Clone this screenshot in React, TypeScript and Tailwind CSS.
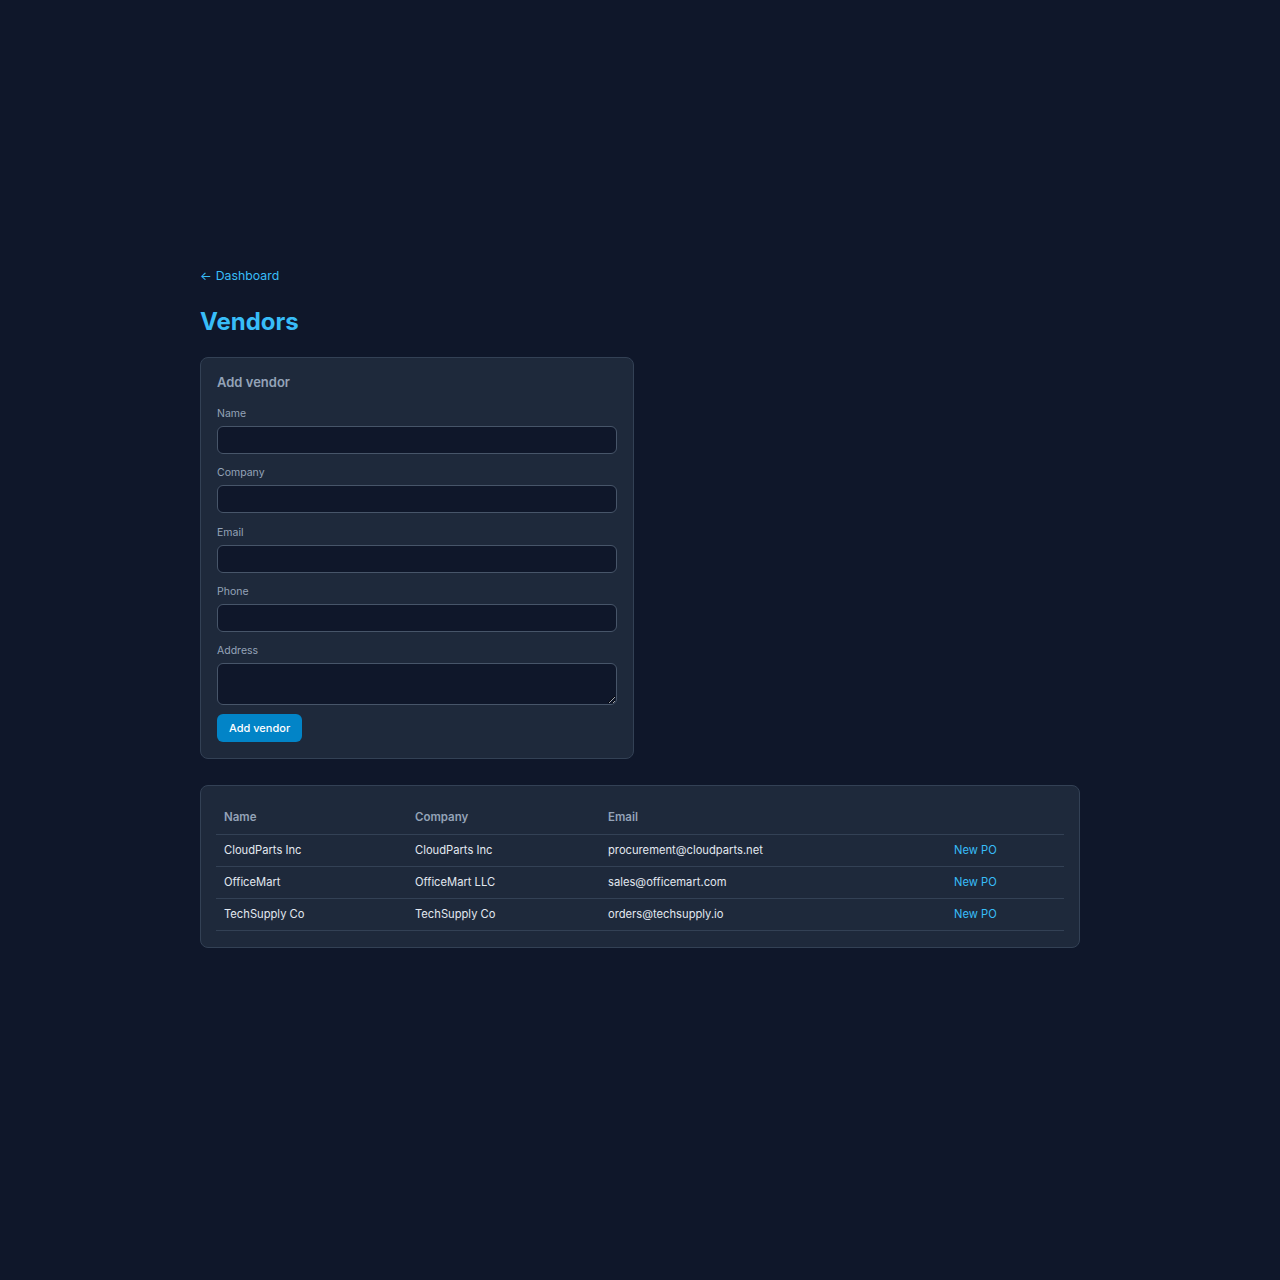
import React from "react";

const fields = ["Name", "Company", "Email", "Phone"];
const rows = [
  ["CloudParts Inc", "CloudParts Inc", "procurement@cloudparts.net"],
  ["OfficeMart", "OfficeMart LLC", "sales@officemart.com"],
  ["TechSupply Co", "TechSupply Co", "orders@techsupply.io"],
];

export default function App() {
  return (
    <div className="min-h-[1280px] bg-[#0f172a] font-['Inter',sans-serif] text-[#e2e8f0]">
      <div className="mx-auto w-[880px] pt-[267px]">
        <a className="text-[12.3px] text-[#38bdf8] flex items-center gap-1 leading-[18px]" href="#">
          <span>←</span>
          <span>Dashboard</span>
        </a>
        <h1 className="mt-[21px] text-[24px] font-bold text-[#38bdf8] leading-8">Vendors</h1>
        <div className="mt-[19px] w-[434px] rounded-lg border border-[#334155] bg-[#1e293b] p-4">
          <h2 className="text-[13px] font-semibold text-[#94a3b8] leading-4">Add vendor</h2>
          <div className="mt-[16px] flex flex-col gap-[11.3px]">
            {fields.map((f) => (
              <div key={f} className="flex flex-col">
                <label className="text-[10.5px] text-[#94a3b8] leading-4">{f}</label>
                <input className="mt-[4px] h-[28px] rounded-md border border-[#475569] bg-[#0f172a] px-2 text-sm outline-none" />
              </div>
            ))}
            <div className="flex flex-col">
              <label className="text-[10.5px] text-[#94a3b8] leading-4">Address</label>
              <textarea className="mt-[4px] h-[42px] rounded-md border border-[#475569] bg-[#0f172a] px-2 text-sm outline-none" />
            </div>
          </div>
          <button className="mt-[9px] h-[28px] rounded-md bg-[#0284c7] px-3 text-[11px] font-medium text-white">
            Add vendor
          </button>
        </div>
        <div className="mt-[26px] rounded-lg border border-[#334155] bg-[#1e293b] px-[15px] py-4">
          <table className="w-full border-collapse">
            <thead>
              <tr className="border-b border-[#334155] text-[11.5px]">
                <th className="w-[191px] h-[32px] px-2 text-left font-semibold text-[#94a3b8]">Name</th>
                <th className="w-[193px] px-2 text-left font-semibold text-[#94a3b8]">Company</th>
                <th className="w-[346px] px-2 text-left font-semibold text-[#94a3b8]">Email</th>
                <th className="px-2"></th>
              </tr>
            </thead>
            <tbody>
              {rows.map((r) => (
                <tr key={r[0]} className="border-b border-[#334155] text-[11.2px]">
                  <td className="h-[32px] px-2 text-[#e2e8f0]">{r[0]}</td>
                  <td className="px-2 text-[#e2e8f0]">{r[1]}</td>
                  <td className="px-2 text-[#e2e8f0]">{r[2]}</td>
                  <td className="px-2 text-[#38bdf8]">New PO</td>
                </tr>
              ))}
            </tbody>
          </table>
        </div>
      </div>
    </div>
  );
}
